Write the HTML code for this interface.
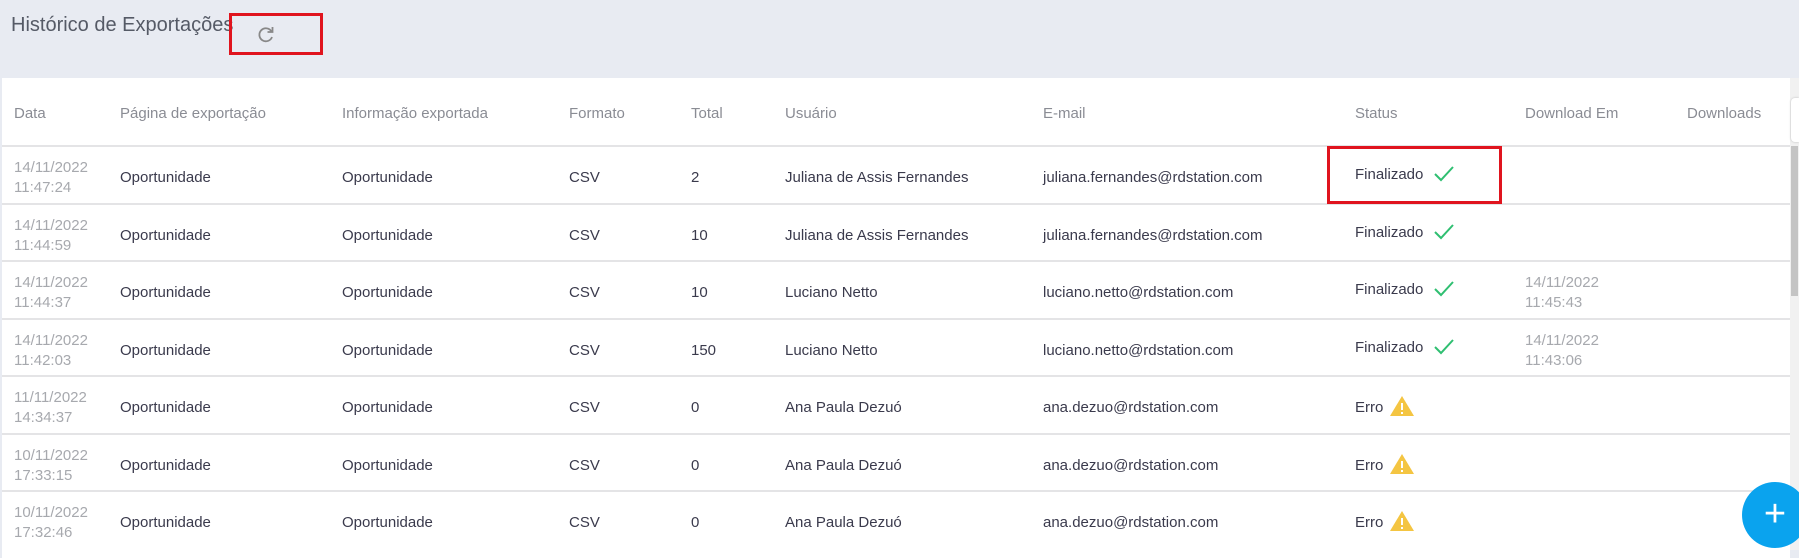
<!DOCTYPE html>
<html><head><meta charset="utf-8"><style>
body{margin:0;width:1799px;height:550px;overflow:hidden;background:#e8ebf2;font-family:"Liberation Sans",sans-serif;position:relative}
.title{position:absolute;left:11px;top:14px;font-size:20px;color:#555a66}
.rb{position:absolute;border:3px solid #e0141e;box-sizing:border-box}
.card{position:absolute;left:2px;top:78px;width:1788px;height:480px;background:#fff}
.c{position:absolute;font-size:15px;color:#3a3a4c;white-space:nowrap}
.h{color:#8a8c94}
.d{color:#a7a9ae;line-height:20px}
.line{position:absolute;left:2px;width:1788px;height:2px;background:#e4e4e6}
.sb{position:absolute;left:1790px;top:78px;width:9px;height:472px;background:#f1f1f1}
.fab{position:absolute;left:1742px;top:482px;width:66px;height:66px;border-radius:50%;background:#0aa3ee;color:#fff;font-size:38px;text-align:center;line-height:64px}
</style></head><body>
<div class="title">Histórico de Exportações</div>
<div class="rb" style="left:229px;top:13px;width:94px;height:42px"></div>
<svg style="position:absolute;left:256px;top:24px" width="20" height="20" viewBox="0 0 20 20"><path d="M15.5 7.5A6.5 6.5 0 1 0 16 13" fill="none" stroke="#888" stroke-width="1.8"/><path d="M16.5 3v5h-5" fill="none" stroke="#888" stroke-width="1.8"/></svg>
<div class="card"></div>
<div class="sb"><div style="position:absolute;left:1px;top:68px;width:7px;height:150px;background:#c4c4c4"></div></div>
<div style="position:absolute;left:1791px;top:98px;width:8px;height:44px;background:#fff;border-radius:4px 0 0 4px;box-shadow:0 0 2px #bbb"></div>
<div id="t"></div>
<div class="rb" style="left:1327px;top:146px;width:175px;height:58px"></div>
<div class="fab">+</div>
<script>
var X=[14,120,342,569,691,785,1043,1355,1525,1687];
var H=["Data","Página de exportação","Informação exportada","Formato","Total","Usuário","E-mail","Status","Download Em","Downloads"];
var R=[["14/11/2022","11:47:24","2","Juliana de Assis Fernandes","juliana.fernandes@rdstation.com",1,""],
["14/11/2022","11:44:59","10","Juliana de Assis Fernandes","juliana.fernandes@rdstation.com",1,""],
["14/11/2022","11:44:37","10","Luciano Netto","luciano.netto@rdstation.com",1,"14/11/2022<br>11:45:43"],
["14/11/2022","11:42:03","150","Luciano Netto","luciano.netto@rdstation.com",1,"14/11/2022<br>11:43:06"],
["11/11/2022","14:34:37","0","Ana Paula Dezuó","ana.dezuo@rdstation.com",0,""],
["10/11/2022","17:33:15","0","Ana Paula Dezuó","ana.dezuo@rdstation.com",0,""],
["10/11/2022","17:32:46","0","Ana Paula Dezuó","ana.dezuo@rdstation.com",0,""]];
var s="";
H.forEach(function(h,i){s+='<div class="c h" style="left:'+X[i]+'px;top:105px">'+h+'</div>';});
var chk='<svg width="22" height="18" viewBox="0 0 22 18" style="vertical-align:-4px;margin-left:10px"><path d="M2 9l6 6L20 2" fill="none" stroke="#2fbf71" stroke-width="2"/></svg>';
var warn='<svg width="26" height="22" viewBox="0 0 26 22" style="vertical-align:-5px;margin-left:6px"><path d="M13 1L25 21H1Z" fill="#f4c542"/><rect x="12" y="8" width="2" height="7" fill="#fff"/><rect x="12" y="17" width="2" height="2" fill="#fff"/></svg>';
R.forEach(function(r,k){var y=146+k*57.5;
s+='<div class="line" style="top:'+(y-1)+'px"></div>';
s+='<div class="c d" style="left:14px;top:'+(y+12)+'px">'+r[0]+'<br>'+r[1]+'</div>';
var ty=y+23;
[[120,"Oportunidade"],[342,"Oportunidade"],[569,"CSV"],[691,r[2]],[785,r[3]],[1043,r[4]]].forEach(function(c){s+='<div class="c" style="left:'+c[0]+'px;top:'+ty+'px">'+c[1]+'</div>';});
s+='<div class="c" style="left:1355px;top:'+(ty-4)+'px">'+(r[5]?'Finalizado'+chk:'Erro'+warn)+'</div>';
if(r[6])s+='<div class="c d" style="left:1525px;top:'+(y+12)+'px">'+r[6]+'</div>';
});
document.getElementById('t').innerHTML=s;
</script>
</body></html>
